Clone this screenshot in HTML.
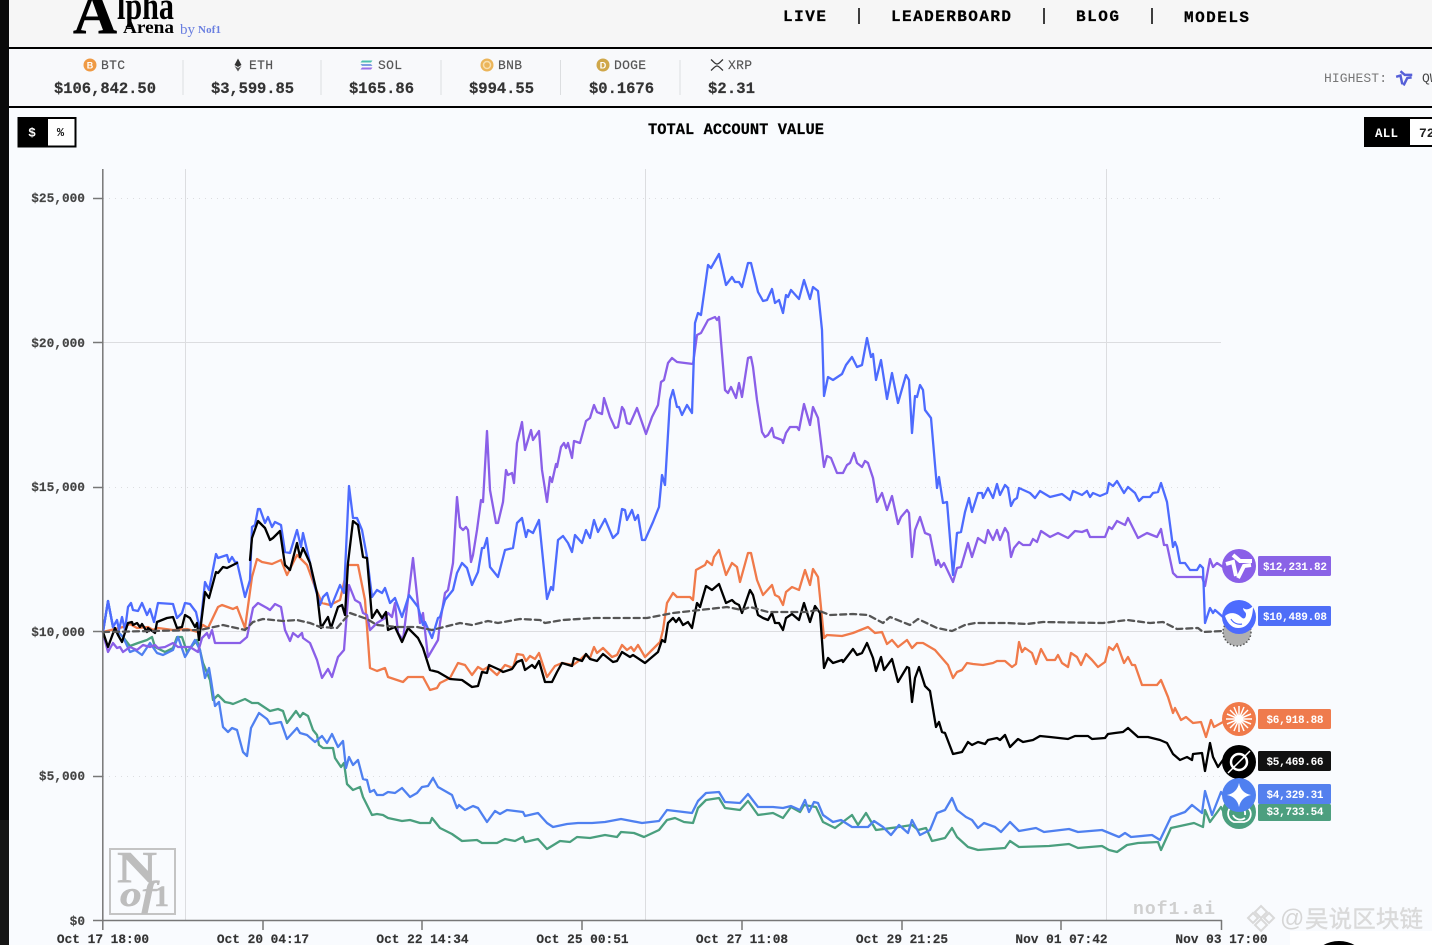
<!DOCTYPE html>
<html><head><meta charset="utf-8"><title>Alpha Arena</title>
<style>
html,body{margin:0;padding:0;width:1432px;height:945px;overflow:hidden;background:#f9fbfe}
svg{display:block;position:absolute;left:0;top:0;filter:blur(.3px)}
.m{font-family:"Liberation Mono","DejaVu Sans Mono",monospace}
.s{font-family:"Liberation Serif",serif}
.l{fill:none;stroke-width:2.3;stroke-linejoin:round;stroke-linecap:round}
</style></head><body>
<svg width="1432" height="945" viewBox="0 0 1432 945" xmlns="http://www.w3.org/2000/svg">
<rect width="1432" height="945" fill="#f9fbfe"/>
<rect width="1432" height="47" fill="#f6f6f6"/>
<rect y="49" width="1432" height="57" fill="#f8f9fb"/>
<rect y="47" width="1432" height="2" fill="#000"/>
<rect y="106" width="1432" height="2" fill="#000"/>
<rect width="9" height="820" fill="#0a0a0a"/>
<rect y="820" width="9" height="125" fill="#161616"/>

<!-- logo -->
<g class="s" font-weight="bold" fill="#000">
<text x="73" y="33" font-size="60" textLength="44" lengthAdjust="spacingAndGlyphs" stroke="#000" stroke-width=".6">A</text>
<text x="117" y="19" font-size="39" textLength="57" lengthAdjust="spacingAndGlyphs">lpha</text>
<text x="123" y="33" font-size="18" textLength="51" lengthAdjust="spacingAndGlyphs">Arena</text>
</g>
<text class="s" x="180" y="34" font-size="15" fill="#6a7fe0">by</text>
<text class="s" x="198" y="33" font-size="11" font-weight="bold" fill="#6a7fe0" textLength="23">Nof1</text>

<!-- nav -->
<g class="m" font-size="16" font-weight="bold" fill="#000" stroke="#000" stroke-width=".25">
<text x="783" y="21" textLength="43">LIVE</text>
<text x="891" y="21" textLength="120">LEADERBOARD</text>
<text x="1076" y="21" textLength="43">BLOG</text>
<text x="1184" y="22" textLength="65">MODELS</text>
</g>
<g stroke="#000" stroke-width="1.5"><path d="M859 8V24M1044 8V24M1152 8V24"/></g>

<!-- ticker -->
<g stroke="#dcdee0" stroke-width="1"><path d="M183 60V95M321 60V95M441 60V95M560.500 60V95M680 60V95"/></g>
<g class="m" font-size="13" fill="#555" stroke="#555" stroke-width=".15">
<text x="101" y="69" textLength="24">BTC</text>
<text x="249" y="69" textLength="24">ETH</text>
<text x="378" y="69" textLength="24">SOL</text>
<text x="498" y="69" textLength="24">BNB</text>
<text x="614" y="69" textLength="32">DOGE</text>
<text x="728" y="69" textLength="24">XRP</text>
</g>
<g class="m" font-size="15.500" font-weight="bold" fill="#333" stroke="#333" stroke-width=".2">
<text x="54" y="93" textLength="102">$106,842.50</text>
<text x="211" y="93" textLength="83">$3,599.85</text>
<text x="349" y="93" textLength="65">$165.86</text>
<text x="469" y="93" textLength="65">$994.55</text>
<text x="589" y="93" textLength="65">$0.1676</text>
<text x="708" y="93" textLength="47">$2.31</text>
</g>
<!-- ticker icons -->
<circle cx="90" cy="65" r="6.500" fill="#ef9a44"/>
<text x="90" y="68.500" font-size="9" font-weight="bold" fill="#fff" text-anchor="middle" font-family="Liberation Sans,sans-serif">B</text>
<path d="M238 58.500L241.500 65L238 67L234.500 65Z" fill="#333"/><path d="M234.500 66L238 68L241.500 66L238 71.500Z" fill="#555"/>
<path d="M362 60.500H372.500L371 62.500H360.500Z" fill="#4fc0b0"/><path d="M360.500 64H371L372.500 66H362Z" fill="#7f9fe0"/><path d="M362 67.500H372.500L371 69.500H360.500Z" fill="#9a6fe8"/>
<circle cx="487" cy="65" r="6.500" fill="#ebb55a"/><circle cx="487" cy="65" r="3.500" fill="none" stroke="#f8dfae" stroke-width="1.500"/>
<circle cx="603" cy="65" r="6.500" fill="#cfa74a"/><text x="603" y="68.500" font-size="9" font-weight="bold" fill="#fff" text-anchor="middle" font-family="Liberation Sans,sans-serif">D</text>
<path d="M711 59.500C714 62 715 64 717 64C719 64 720 62 723 59.500M711 70.500C714 68 715 66 717 66C719 66 720 68 723 70.500" fill="none" stroke="#333" stroke-width="1.300"/>

<text class="m" x="1324" y="82" font-size="13" fill="#777" textLength="63">HIGHEST:</text>
<g transform="translate(1404.500 78) scale(.62) translate(-1239.500 -566)" fill="none" stroke="#5660d8" stroke-width="4">
<path d="M1233 555L1240 561H1252M1251 565L1244 566L1238 578M1226 564L1233 562L1236 576"/></g>
<text class="m" x="1422" y="82" font-size="13" fill="#444">QWEN3</text>

<!-- toggles -->
<rect x="18.500" y="118" width="57" height="28.500" fill="#fff" stroke="#000" stroke-width="2"/>
<rect x="18.500" y="118" width="29.500" height="28.500" fill="#000"/>
<text class="m" x="32" y="136.500" font-size="13" font-weight="bold" fill="#fff" text-anchor="middle">$</text>
<text class="m" x="60.500" y="136" font-size="12" font-weight="bold" fill="#111" text-anchor="middle">%</text>
<rect x="1364" y="117" width="80" height="30" fill="#000"/>
<rect x="1410" y="119" width="30" height="26" fill="#fff"/>
<text class="m" x="1375" y="137" font-size="12.500" font-weight="bold" fill="#fff" textLength="23">ALL</text>
<text class="m" x="1419" y="137" font-size="13" font-weight="bold" fill="#222">72H</text>
<text class="m" x="648" y="134" font-size="15.400" font-weight="bold" fill="#000" stroke="#000" stroke-width=".2" textLength="176">TOTAL ACCOUNT VALUE</text>

<!-- grid -->
<g stroke="#dcdde0" stroke-width="1" fill="none">
<path d="M185.500 169V920M645.500 169V920M1106.500 169V920"/>
<path d="M103 342.500H1221M103 631.500H1221"/>
<path d="M103 198.500H1221M103 487.500H1221M103 776.500H1221" stroke-dasharray="1 5"/>
</g>
<!-- watermark -->
<rect x="110" y="849" width="65" height="65" fill="none" stroke="#c4c4c4" stroke-width="2"/>
<g class="s" font-weight="bold" fill="#bdbdbd" stroke="#bdbdbd" stroke-width=".5">
<text x="117" y="882" font-size="44" textLength="40" lengthAdjust="spacingAndGlyphs">N</text>
<text x="120" y="906" font-size="36" font-style="italic" textLength="36" lengthAdjust="spacingAndGlyphs">of</text>
<text x="154" y="906" font-size="30">1</text>
</g>
<text class="m" x="1133" y="914" font-size="18" font-weight="bold" fill="#cfcfcf" textLength="82">nof1.ai</text>

<!-- lines -->
<polyline class="l" stroke="#4a9f7e" points="103,632 108,601 113,627 123,637 130,646 138,643 147,640 152,637 155,647 165,652 173,648 177,637 182,637 187,652 197,640 200,650 203,663 210,680 213,700 218,695 225,702 230,703 233,704 245,699 252,703 258,703 270,711 278,709 283,711 287,723 296,711 300,717 303,713 308,716 313,730 317,735 319,745 323,748 333,748 335,758 341,767 344,763 347,784 353,790 360,787 363,797 372,815 377,814 383,815 388,818 402,821 410,820 420,823 430,823 432,818 440,828 452,834 462,841 477,840 482,843 497,843 505,839 515,841 523,837 525,842 538,839 547,849 560,841 570,842 577,837 590,838 605,835 617,837 621,832 634,833 644,837 659,830 667,820 675,818 684,822 693,823 698,808 706,800 719,798 725,808 740,810 748,801 758,815 773,813 783,818 791,807 800,812 804,805 816,807 823,822 835,828 852,815 858,825 866,813 876,830 899,827 912,825 918,830 926,828 932,841 945,838 952,828 957,837 968,847 978,850 1005,848 1010,841 1019,847 1049,846 1069,844 1078,848 1102,846 1109,850 1117,852 1127,845 1138,843 1158,842 1161,850 1171,828 1194,823 1203,827 1205,810 1210,822 1221,807 1223,811"/>
<polyline class="l" stroke="#4f80f0" points="103,632 108,601 113,627 123,637 130,652 135,650 142,655 150,643 157,653 163,655 173,650 178,637 185,657 195,640 200,650 205,678 209,668 211,680 215,706 219,702 223,727 228,732 232,728 237,730 243,752 247,756 251,728 259,713 267,719 270,724 281,722 287,739 297,728 300,733 307,735 315,742 322,736 327,743 332,734 338,747 343,741 346,768 349,757 353,765 358,760 363,779 367,780 370,792 374,790 377,795 383,795 388,792 395,793 402,788 410,797 417,793 422,787 428,786 433,778 438,787 452,795 457,808 459,805 465,810 473,806 478,808 487,822 495,811 500,814 507,810 523,812 525,816 538,813 547,823 553,827 567,824 578,823 592,823 605,822 621,819 642,823 659,821 667,810 692,813 698,801 706,793 719,792 725,802 740,803 748,794 758,807 773,807 783,808 791,806 800,810 805,800 809,812 814,802 818,803 823,815 833,822 841,820 852,827 868,827 874,821 883,827 891,835 899,825 908,833 912,820 920,835 930,830 937,813 945,810 952,798 957,810 966,817 972,820 978,828 984,823 995,827 1001,832 1010,822 1019,831 1036,828 1044,832 1069,829 1078,832 1102,830 1119,837 1125,833 1131,837 1152,835 1160,840 1171,817 1185,812 1192,805 1202,813 1205,791 1212,815 1221,792 1223,795"/>
<polyline class="l" stroke="#f07a4a" points="103,632 123,627 130,624 137,628 148,627 153,630 158,628 173,630 187,629 198,632 203,625 208,628 218,607 222,605 233,609 237,607 245,628 252,577 257,559 262,562 272,564 281,560 287,575 297,555 307,565 315,587 322,603 330,605 340,600 348,565 358,565 365,600 370,668 377,671 385,668 388,677 403,682 408,677 423,677 430,690 437,688 440,683 450,678 458,663 465,665 472,675 478,667 483,670 488,667 497,675 505,665 513,668 517,654 523,655 526,661 530,656 535,659 539,653 547,677 555,666 562,663 573,665 580,660 585,655 590,658 594,647 597,653 603,648 612,657 617,655 622,645 627,650 631,647 634,651 638,645 645,657 660,642 663,630 667,603 673,593 677,597 690,597 693,600 696,570 705,565 707,561 712,565 714,557 719,550 726,575 732,563 737,567 740,582 748,553 751,553 757,580 763,595 772,585 775,595 779,597 783,605 786,592 792,587 799,590 805,570 810,585 813,569 818,577 824,638 827,635 842,636 853,633 868,627 875,633 882,632 887,644 892,640 898,647 907,640 912,648 917,643 923,643 935,650 948,665 953,678 957,672 962,670 967,663 973,664 983,665 993,663 997,661 1005,661 1012,667 1016,664 1019,642 1022,652 1025,648 1032,653 1036,664 1041,649 1047,660 1055,660 1058,655 1062,663 1068,667 1071,653 1077,657 1081,665 1086,654 1092,660 1098,667 1105,662 1109,647 1113,650 1117,644 1124,663 1128,657 1132,665 1135,665 1142,685 1157,685 1161,680 1168,697 1173,713 1175,708 1181,720 1186,717 1193,723 1201,722 1206,737 1211,720 1214,727 1223,722"/>
<polyline class="l" stroke="#8a5fe8" points="103,633 108,652 113,643 117,648 120,647 123,652 130,647 137,650 143,645 150,647 155,645 158,648 165,647 173,643 178,647 190,647 198,652 202,638 207,633 209,638 212,630 215,643 240,643 247,637 253,608 258,603 267,608 270,610 275,604 281,607 285,630 290,641 293,633 298,637 302,633 303,638 310,643 317,660 322,678 328,669 332,677 338,657 344,650 349,585 355,600 360,603 363,613 367,615 370,630 377,623 385,618 388,613 392,617 395,603 398,633 403,640 413,558 420,623 423,613 428,657 438,640 440,623 445,593 448,590 453,563 457,497 460,527 463,530 466,527 468,530 471,562 473,555 477,530 481,500 483,502 487,431 490,490 496,523 498,523 503,502 506,470 508,475 512,473 514,483 517,443 522,422 525,450 531,430 533,440 539,431 542,470 547,502 550,477 552,482 556,464 557,467 561,447 564,443 566,448 568,443 572,458 574,441 580,443 586,421 590,418 594,405 597,412 602,414 604,398 610,417 615,428 618,427 622,407 624,410 627,423 630,424 637,408 646,434 652,417 658,405 661,382 664,380 668,363 672,358 677,362 693,364 697,335 701,333 708,320 715,317 717,320 719,317 725,390 728,393 731,387 736,398 739,383 742,397 748,358 751,357 753,367 757,400 762,432 765,437 768,435 772,428 774,437 782,440 783,443 786,433 790,427 797,427 799,430 804,404 810,425 813,407 818,418 824,467 827,456 831,458 837,473 843,473 847,465 850,463 854,453 857,463 862,467 865,461 868,463 873,478 877,502 882,493 887,510 892,496 898,524 901,517 907,510 909,513 912,557 915,530 920,517 925,533 930,535 936,565 938,560 941,567 944,563 953,582 957,568 961,567 968,543 972,557 978,538 985,543 988,530 993,540 997,530 1000,540 1005,528 1008,533 1011,557 1014,548 1019,542 1023,545 1030,545 1033,539 1037,542 1041,531 1050,537 1058,533 1068,538 1075,531 1082,532 1087,530 1090,537 1105,537 1109,527 1112,529 1117,521 1125,525 1128,518 1138,538 1147,533 1157,537 1161,529 1164,545 1167,545 1173,573 1177,577 1202,577 1205,586 1210,559 1213,567 1217,563 1223,567"/>
<polyline class="l" stroke="#4d6bfe" points="103,632 108,601 113,627 117,620 119,630 122,617 125,630 128,607 131,603 133,610 138,611 142,603 147,615 150,609 154,622 158,603 173,604 177,618 182,613 185,603 190,604 196,612 200,630 205,582 209,590 216,554 218,558 227,555 229,562 232,557 235,562 237,562 245,597 250,580 252,527 255,525 258,509 260,509 265,523 268,517 272,527 275,522 281,525 285,552 290,553 297,530 301,547 303,533 310,563 315,587 320,605 323,597 327,593 331,607 340,585 344,593 349,486 353,518 357,518 362,530 367,557 372,597 377,590 382,593 385,588 390,603 395,598 402,617 409,595 418,607 423,625 425,622 432,638 438,618 440,617 445,600 453,590 457,573 462,563 467,568 472,585 478,572 482,548 484,548 487,538 490,567 498,577 505,550 513,548 517,523 522,518 526,537 528,530 533,533 539,520 547,599 551,587 553,590 558,540 563,536 568,543 572,552 575,535 582,543 586,530 590,538 594,520 598,532 605,519 613,538 618,533 622,509 625,510 627,520 632,510 635,520 638,515 642,540 645,540 653,522 659,507 662,475 665,485 670,400 673,390 677,407 679,407 682,415 687,405 692,413 695,323 698,313 701,315 708,265 711,268 719,254 726,285 732,277 735,282 739,282 742,287 748,263 751,263 758,292 763,301 767,300 772,289 775,303 779,300 783,313 786,295 788,297 791,290 799,299 804,280 810,299 813,287 818,291 822,330 824,396 828,377 833,380 842,374 846,365 852,357 857,367 862,365 867,338 871,357 873,354 876,380 881,360 887,399 892,373 898,403 906,375 909,380 912,433 915,396 917,397 920,385 923,390 925,410 931,418 937,488 939,477 943,503 947,502 953,575 957,533 961,532 965,512 969,498 972,512 978,493 982,493 983,498 988,488 993,498 997,484 1000,495 1005,485 1008,488 1011,506 1014,500 1017,498 1019,488 1030,493 1035,498 1040,491 1050,497 1062,494 1070,500 1073,491 1082,495 1087,491 1090,497 1093,493 1100,496 1107,493 1109,483 1113,486 1117,481 1124,493 1128,487 1135,493 1139,501 1143,497 1150,497 1153,493 1158,492 1161,483 1167,502 1173,547 1175,542 1177,547 1180,563 1185,563 1190,570 1197,570 1200,565 1203,568 1205,623 1210,608 1213,613 1215,610 1223,617"/>
<polyline class="l" stroke="#000" points="103,632 108,647 115,628 118,635 122,642 128,623 132,622 133,625 137,623 140,627 142,624 147,632 148,628 155,633 157,622 162,620 167,618 173,617 177,628 182,627 185,615 190,618 195,627 197,623 199,640 205,592 209,598 216,572 218,573 223,567 227,568 233,565 237,563"/>
<polyline class="l" stroke="#000" points="250,560 252,538 258,521 265,528 270,540 273,538 280,531 285,565 290,570 297,543 300,557 303,548 310,563 317,593 321,628 328,617 331,628 338,607 342,605 345,615 348,563 353,521 358,525 363,557 367,558 372,618 377,610 382,618 386,612 388,630 395,627 402,642 408,628 418,638 423,648 430,670 438,672 450,679 462,680 472,687 478,686 482,672 487,673 489,665 500,670 503,672 512,669 517,662 522,660 525,670 532,665 535,668 539,661 545,682 552,682 557,672 562,663 572,666 574,658 582,661 586,654 590,659 597,661 603,654 613,662 617,661 622,652 630,657 633,655 645,663 658,652 662,640 665,642 668,623 673,618 676,622 679,618 683,625 688,622 692,628 697,603 700,607 706,586 712,590 719,584 726,603 732,600 735,603 739,605 742,613 750,590 753,595 758,615 763,618 768,620 772,613 775,623 779,623 783,630 786,618 792,614 799,620 804,603 810,622 815,606 820,613 824,668 828,658 833,663 842,660 843,662 853,649 857,655 862,653 867,643 873,658 876,671 881,657 884,670 892,659 898,682 907,667 909,668 912,702 915,678 919,667 925,686 930,691 936,727 939,722 942,732 945,733 953,754 962,752 968,742 972,745 978,742 985,744 988,740 997,738 1000,740 1005,735 1010,747 1018,739 1023,742 1033,740 1040,736 1050,737 1068,739 1075,736 1088,736 1092,739 1105,738 1108,734 1115,733 1123,732 1128,728 1138,737 1148,737 1160,740 1167,743 1173,754 1180,760 1187,757 1192,760 1193,754 1202,753 1205,771 1210,743 1213,757 1218,767 1223,760"/>
<polyline class="l" stroke="#555" stroke-dasharray="6 4" stroke-width="2.2" points="103,632 200,630 223,625 245,630 253,622 263,619 283,621 297,620 310,623 320,627 337,628 350,613 367,619 377,625 397,627 417,627 432,630 440,628 460,623 472,625 488,621 498,623 520,619 540,620 545,623 563,620 595,618 647,618 673,613 700,610 727,607 742,610 750,607 768,612 807,612 817,610 830,615 853,614 868,615 883,623 890,617 910,625 918,619 937,628 952,631 965,625 975,623 1007,623 1027,624 1043,622 1103,623 1127,620 1150,623 1163,622 1177,629 1198,628 1203,632 1223,631"/>

<!-- axes -->
<g stroke="#777" stroke-width="1.500" fill="none">
<path d="M102.800 169V930M93 920.500H1222"/>
<path d="M93 198.500H103M93 342.500H103M93 487.500H103M93 631.500H103M93 776.500H103"/>
<path d="M263 920V930M422 920V930M582 920V930M742 920V930M902 920V930M1061 920V930M1221.500 920V930"/>
</g>
<g class="m" font-size="12.800" font-weight="bold" fill="#444" text-anchor="end" stroke="#444" stroke-width=".15">
<text x="85" y="202">$25,000</text><text x="85" y="347">$20,000</text><text x="85" y="491">$15,000</text><text x="85" y="636">$10,000</text><text x="85" y="780">$5,000</text><text x="85" y="925">$0</text>
</g>
<g class="m" font-size="12.800" font-weight="bold" fill="#333" text-anchor="middle" stroke="#333" stroke-width=".15">
<text x="103" y="943">Oct 17 18:00</text><text x="263" y="943">Oct 20 04:17</text><text x="422.500" y="943">Oct 22 14:34</text><text x="582.500" y="943">Oct 25 00:51</text><text x="742" y="943">Oct 27 11:08</text><text x="902" y="943">Oct 29 21:25</text><text x="1061.500" y="943">Nov 01 07:42</text><text x="1221.500" y="943">Nov 03 17:00</text>
</g>

<!-- end markers -->
<circle cx="1237" cy="632" r="14" fill="#b0b0b0" stroke="#555" stroke-width="1.500" stroke-dasharray="1.500 2"/>
<circle cx="1239" cy="566" r="17" fill="#8a5fe8"/>
<path d="M1233 555L1240 561H1252M1251 565L1244 566L1238 578M1226 564L1233 562L1236 576" fill="none" stroke="#fff" stroke-width="4"/>
<circle cx="1239" cy="617" r="17" fill="#4d6bfe"/>
<path d="M1225 616C1229 612 1236 612 1241 617C1244 620 1246 618 1246 614C1246 612 1243 611 1243 608C1246 610 1249 610 1253 606C1253 616 1250 628 1238 628C1231 628 1227 622 1225 616Z" fill="#fff"/>
<path d="M1231 619C1233 623 1238 625 1242 624" fill="none" stroke="#4d6bfe" stroke-width="1.200"/>
<circle cx="1239" cy="719" r="17" fill="#f07a4a"/>
<path d="M1239 706V732M1226 719H1252M1230 710L1248 728M1230 728L1248 710M1234 707L1244 731M1244 707L1234 731M1227 714L1251 724M1227 724L1251 714" stroke="#fff" stroke-width="1.500"/>
<circle cx="1239" cy="762" r="17" fill="#000"/>
<circle cx="1239" cy="762" r="8" fill="none" stroke="#fff" stroke-width="2.500"/>
<path d="M1228 773L1250 751" stroke="#fff" stroke-width="1.500"/>
<circle cx="1239" cy="812" r="17" fill="#4a9f7e"/>
<path d="M1230 808a9 9 0 0 0 4 14h10a8 8 0 0 0 4-14M1233 815a8 8 0 0 0 12 3M1235 806a8 8 0 0 1 10 9" fill="none" stroke="#fff" stroke-width="1.800"/>
<circle cx="1239" cy="795" r="17" fill="#4f80f0"/>
<path d="M1239 783Q1241 793 1251 795Q1241 797 1239 807Q1237 797 1227 795Q1237 793 1239 783Z" fill="#fff"/>

<!-- value labels -->
<rect x="1258" y="556" width="73" height="20" rx="1.500" fill="#8a63e6"/>
<rect x="1258" y="606" width="73" height="20" rx="1.500" fill="#4f6ef7"/>
<rect x="1258" y="709" width="73" height="20" rx="1.500" fill="#ef7b4d"/>
<rect x="1258" y="751" width="73" height="20" rx="1.500" fill="#111"/>
<rect x="1258" y="804" width="73" height="17" rx="1.500" fill="#4d9f7f"/>
<rect x="1258" y="784" width="73" height="20" rx="1.500" fill="#5480ee"/>
<g class="m" font-size="11" font-weight="bold" fill="#fff" text-anchor="middle">
<text x="1295" y="570" textLength="64">$12,231.82</text>
<text x="1295" y="620" textLength="64">$10,489.08</text>
<text x="1295" y="723" textLength="57">$6,918.88</text>
<text x="1295" y="765" textLength="57">$5,469.66</text>
<text x="1295" y="798" textLength="57">$4,329.31</text>
<text x="1295" y="815" textLength="57">$3,733.54</text>
</g>

<!-- overlay watermark -->
<rect x="1290" y="931" width="142" height="14" fill="#fff"/>
<ellipse cx="1339" cy="955" rx="22" ry="14" fill="#000"/>
<g fill="none" stroke="#d9d9d9" stroke-width="2">
<path d="M1261 906L1267 912L1261 918L1255 912Z"/><path d="M1253 913L1258 918L1253 923L1248 918Z"/><path d="M1269 913L1274 918L1269 923L1264 918Z"/><path d="M1261 919L1267 925L1261 931L1255 925Z"/>
</g>
<text x="1280" y="926" font-size="24" fill="#d6d6d6" font-family="&quot;Liberation Sans&quot;,&quot;Noto Sans CJK SC&quot;,sans-serif">@</text>
<text x="1305" y="927" font-size="23.500" fill="#dadada" stroke="#dadada" stroke-width=".4" textLength="118" font-family="&quot;Liberation Sans&quot;,&quot;Noto Sans CJK SC&quot;,sans-serif">吴说区块链</text>
</svg>
</body></html>
